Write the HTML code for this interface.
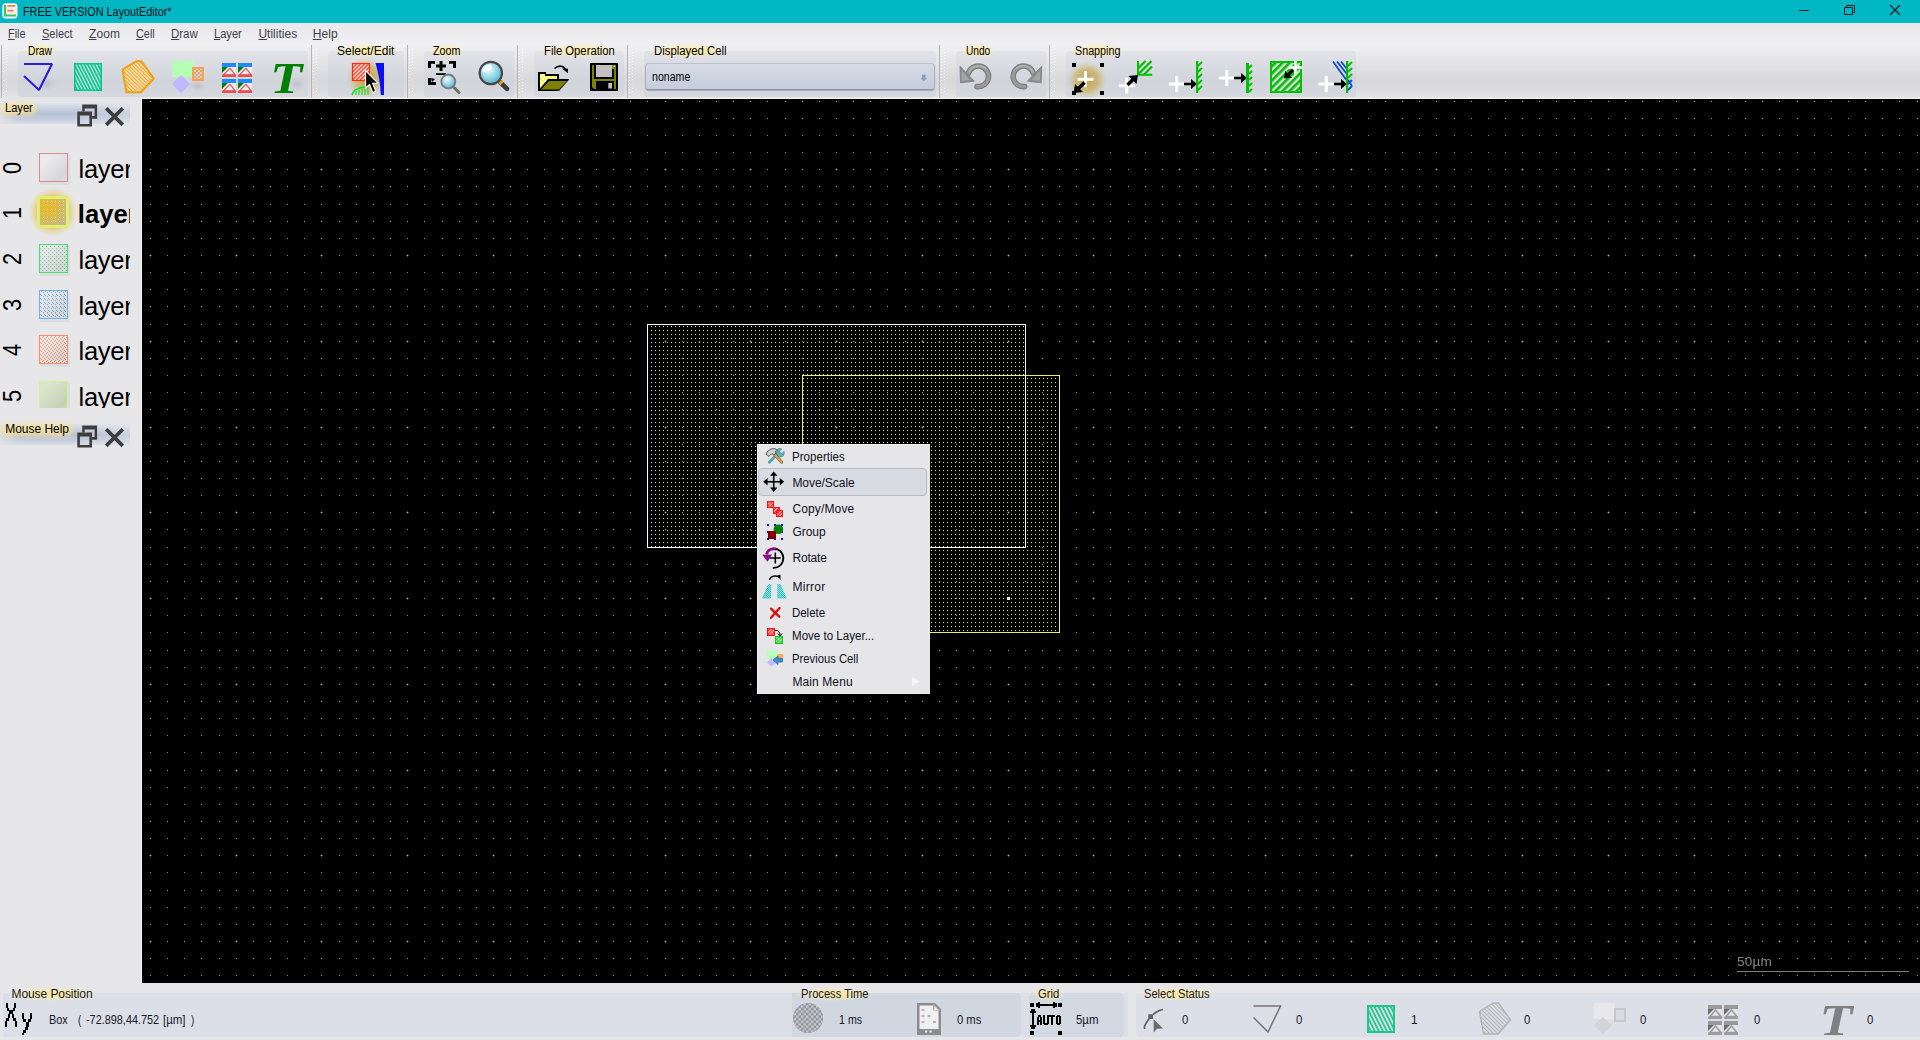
<!DOCTYPE html>
<html><head><meta charset="utf-8"><title>LayoutEditor</title>
<style>
*{box-sizing:border-box;margin:0;padding:0}
html,body{width:1920px;height:1040px;overflow:hidden;background:#e6e6e8;font-family:"Liberation Sans",sans-serif;font-size:12px;color:#141414}
.abs{position:absolute}
#title{position:absolute;left:0;top:0;width:1920px;height:23px;background:#00b7c3}
#title .t{position:absolute;left:23px;top:4px;font-size:12px;line-height:14px;color:#0a1416;letter-spacing:-.02px;white-space:nowrap}
#chrome{position:absolute;left:0;top:23px;width:1920px;height:76px;background:linear-gradient(#e8e8ea 0,#f0f0f2 22px,#e4e4e6 40px,#d8d8da 58px,#dcdcde 66px,#e3e3e5 74px,#e6e6e8 76px)}
.mi{position:absolute;top:28px;font-size:12px;line-height:14px;color:#3c3c46;white-space:nowrap}
.mi u{text-decoration:underline;text-underline-offset:1px}
.grp{position:absolute;background:linear-gradient(rgba(208,213,226,.38),rgba(198,204,218,.46));border-radius:3px}
.glab{position:absolute;font-size:12px;line-height:14px;color:#000;white-space:nowrap;padding:0 3px;background:radial-gradient(ellipse at center,rgba(255,232,150,.9) 0,rgba(255,236,170,.55) 55%,rgba(255,240,190,0) 100%);border-radius:5px}
.hdl{position:absolute;width:5px;background-image:linear-gradient(#fbfbfb 0,#fbfbfb 1.200px,rgba(255,255,255,0) 1.200px),linear-gradient(#fbfbfb 0,#fbfbfb 1.200px,rgba(255,255,255,0) 1.200px);background-size:1px 3px,1px 3px;background-position:1px 1px,4px 0;background-repeat:repeat-y,repeat-y}
.vsep{position:absolute;width:1px;background:#b4b4b8}
#left{position:absolute;left:0;top:99px;width:142px;height:884px;background:#e7e7e9}
#canvas{position:absolute;left:142px;top:99px;width:1778px;height:884px;background:#000;overflow:hidden;box-shadow:0 0 0 1px #f6f6f6}
#status{position:absolute;left:0;top:983px;width:1920px;height:57px;background:#e6e6e8}
.sv{position:absolute;font-size:11px;line-height:14px;color:#1e1e28;white-space:nowrap}
#menu{position:absolute;left:757px;top:444px;width:173px;height:250px;background:#e6e6e8;border-left:1px solid #f4f4f6;border-top:1px solid #f4f4f6}
#menu .it{position:absolute;left:34px;font-size:12px;line-height:14px;color:#14141e;white-space:nowrap;letter-spacing:-.2px}
#menu .hl{position:absolute;left:0px;top:23px;width:169px;height:28px;background:#d9dbe3;border:1px solid #b9bcc8;border-radius:4px}
.lyr{position:absolute;left:78px;font-size:24px;line-height:28px;color:#000;white-space:nowrap;width:52px;overflow:hidden}
.lnum{position:absolute;left:0;width:28px;height:28px;font-size:22px;line-height:28px;text-align:center;color:#000;transform:rotate(-90deg)}
.sw{position:absolute;left:39px;width:29px;height:29px}
.dock{position:absolute;left:0;width:130px;height:21px;background:linear-gradient(90deg,rgba(231,231,233,.75) 0,rgba(231,231,233,0) 14%,rgba(231,231,233,0) 62%,rgba(231,231,233,.45) 100%),linear-gradient(#dfe3eb 0,#c6cfde 30%,#b5c1d5 52%,#c3ccdc 75%,#d9dee7 100%)}
.glow2{position:absolute;border-radius:4px;background:rgba(255,226,140,.62);box-shadow:0 0 4px 2px rgba(255,228,150,.5)}
</style></head><body>
<style>
.glow{position:absolute;border-radius:7px;background:radial-gradient(ellipse closest-side at center,rgba(255,234,150,.9) 0,rgba(255,236,165,.62) 55%,rgba(255,244,210,0) 100%)}
</style>
<style>
.sw0{background:linear-gradient(135deg,#ececee 30%,#d6d6d8 75%,#dcdcde)}
.sw2{background-color:#e8e2e8;background-image:radial-gradient(circle at 1px 1px,#4ee078 .75px,rgba(78,224,120,0) 1.150px),radial-gradient(circle at 3px 3px,#4ee078 .75px,rgba(78,224,120,0) 1.150px);background-size:4px 4px}
.sw3{background-color:#e6e4e6;background-image:linear-gradient(45deg,rgba(0,0,0,0) 40%,#74b6e2 40%,#74b6e2 60%,rgba(0,0,0,0) 60%);background-size:4px 4px;}
.sw4{background-color:#ece4e4;background-image:repeating-linear-gradient(45deg,#ff9070 0,#ff9070 1px,rgba(0,0,0,0) 1px,rgba(0,0,0,0) 2.830px),repeating-linear-gradient(-45deg,#ff9070 0,#ff9070 .8px,rgba(0,0,0,0) .8px,rgba(0,0,0,0) 2.830px)}
.sw5{background-color:#e4eadc;background-image:repeating-linear-gradient(45deg,#d4f09a 0,#d4f09a 1px,rgba(0,0,0,0) 1px,rgba(0,0,0,0) 2.830px),repeating-linear-gradient(-45deg,#d4f09a 0,#d4f09a 1px,rgba(0,0,0,0) 1px,rgba(0,0,0,0) 2.830px)}
</style>
<div id="title"></div>
<svg class="abs" style="left:0;top:0" width="24" height="23" viewBox="0 0 24 23"><rect x="2.3" y="3.2" width="15.2" height="15.2" rx="3.2" fill="#f4f2f0"/><path d="M4 5h2.2v9.4H16v2.1H4z" fill="#48be5e"/><rect x="7.2" y="5.1" width="8.4" height="1.7" rx=".8" fill="#ee8250"/><rect x="7.2" y="9.7" width="6.6" height="1.8" rx=".8" fill="#ee8250"/></svg>
<div class="abs " style="left:23.30px;top:5.00px;font-size:12px;line-height:15px;color:#041416;white-space:nowrap;transform:scaleX(0.9020);transform-origin:0 0;">FREE VERSION LayoutEditor*</div>
<svg class="abs" style="left:1780px;top:0" width="140" height="23" viewBox="0 0 140 23" fill="none" stroke="#0a1a1c" stroke-width="1"><path d="M19 10.5h10"/><path d="M64.500 7.500h8v7h-8zM66.500 7.500v-2h8v7h-2"/><path d="M110 5l10 10M120 5l-10 10" stroke-width="1.1"/></svg>
<div id="chrome"></div>
<div class="abs " style="left:8.40px;top:27.00px;font-size:12px;line-height:15px;color:#3e3e48;white-space:nowrap;transform:scaleX(0.9050);transform-origin:0 0;text-underline-offset:1px;"><u>F</u>ile</div>
<div class="abs " style="left:42.20px;top:27.00px;font-size:12px;line-height:15px;color:#3e3e48;white-space:nowrap;transform:scaleX(0.9175);transform-origin:0 0;text-underline-offset:1px;"><u>S</u>elect</div>
<div class="abs " style="left:89.00px;top:27.00px;font-size:12px;line-height:15px;letter-spacing:0.081px;color:#3e3e48;white-space:nowrap;text-underline-offset:1px;"><u>Z</u>oom</div>
<div class="abs " style="left:136.00px;top:27.00px;font-size:12px;line-height:15px;color:#3e3e48;white-space:nowrap;transform:scaleX(0.9045);transform-origin:0 0;text-underline-offset:1px;"><u>C</u>ell</div>
<div class="abs " style="left:171.00px;top:27.00px;font-size:12px;line-height:15px;color:#3e3e48;white-space:nowrap;transform:scaleX(0.9570);transform-origin:0 0;text-underline-offset:1px;"><u>D</u>raw</div>
<div class="abs " style="left:214.10px;top:27.00px;font-size:12px;line-height:15px;color:#3e3e48;white-space:nowrap;transform:scaleX(0.9261);transform-origin:0 0;text-underline-offset:1px;"><u>L</u>ayer</div>
<div class="abs " style="left:258.40px;top:27.00px;font-size:12px;line-height:15px;letter-spacing:0.014px;color:#3e3e48;white-space:nowrap;text-underline-offset:1px;"><u>U</u>tilities</div>
<div class="abs " style="left:312.75px;top:27.00px;font-size:12px;line-height:15px;letter-spacing:0.117px;color:#3e3e48;white-space:nowrap;text-underline-offset:1px;"><u>H</u>elp</div>
<div class="vsep" style="left:1px;top:45px;height:53px"></div>
<div class="hdl" style="left:2px;top:49px;height:45px"></div>
<div class="hdl" style="left:312px;top:49px;height:45px"></div>
<div class="hdl" style="left:408px;top:49px;height:45px"></div>
<div class="hdl" style="left:518px;top:49px;height:45px"></div>
<div class="hdl" style="left:628px;top:49px;height:45px"></div>
<div class="hdl" style="left:940px;top:49px;height:45px"></div>
<div class="hdl" style="left:1050px;top:49px;height:45px"></div>
<div class="vsep" style="left:311px;top:45px;height:53px"></div>
<div class="vsep" style="left:407px;top:45px;height:53px"></div>
<div class="vsep" style="left:517px;top:45px;height:53px"></div>
<div class="vsep" style="left:627px;top:45px;height:53px"></div>
<div class="vsep" style="left:939px;top:45px;height:53px"></div>
<div class="vsep" style="left:1049px;top:45px;height:53px"></div>
<div class="grp" style="left:18px;top:51px;width:290px;height:45.500px"></div>
<div class="grp" style="left:328px;top:51px;width:76px;height:45.500px"></div>
<div class="grp" style="left:424px;top:51px;width:90px;height:45.500px"></div>
<div class="grp" style="left:534px;top:51px;width:90px;height:45.500px"></div>
<div class="grp" style="left:644px;top:51px;width:292px;height:45.500px"></div>
<div class="grp" style="left:956px;top:51px;width:90px;height:45.500px"></div>
<div class="grp" style="left:1066px;top:51px;width:290px;height:45.500px"></div>
<div class="glow" style="left:22.0px;top:44px;width:36.0px;height:14px"></div>
<div class="abs " style="left:28.00px;top:43.00px;font-size:12.5px;line-height:16px;color:#000;white-space:nowrap;transform:scaleX(0.8228);transform-origin:0 0;">Draw</div>
<div class="glow" style="left:331.0px;top:44px;width:69.4px;height:14px"></div>
<div class="abs " style="left:337.00px;top:43.00px;font-size:12.5px;line-height:16px;color:#000;white-space:nowrap;transform:scaleX(0.9606);transform-origin:0 0;">Select/Edit</div>
<div class="glow" style="left:427.0px;top:44px;width:39.4px;height:14px"></div>
<div class="abs " style="left:433.00px;top:43.00px;font-size:12.5px;line-height:16px;color:#000;white-space:nowrap;transform:scaleX(0.8576);transform-origin:0 0;">Zoom</div>
<div class="glow" style="left:537.8px;top:44px;width:82.9px;height:14px"></div>
<div class="abs " style="left:543.75px;top:43.00px;font-size:12.5px;line-height:16px;color:#000;white-space:nowrap;transform:scaleX(0.9025);transform-origin:0 0;">File Operation</div>
<div class="glow" style="left:647.8px;top:44px;width:84.5px;height:14px"></div>
<div class="abs " style="left:653.75px;top:43.00px;font-size:12.5px;line-height:16px;color:#000;white-space:nowrap;transform:scaleX(0.9074);transform-origin:0 0;">Displayed Cell</div>
<div class="glow" style="left:959.8px;top:44px;width:36.2px;height:14px"></div>
<div class="abs " style="left:965.80px;top:43.00px;font-size:12.5px;line-height:16px;color:#000;white-space:nowrap;transform:scaleX(0.8099);transform-origin:0 0;">Undo</div>
<div class="glow" style="left:1068.6px;top:44px;width:57.4px;height:14px"></div>
<div class="abs " style="left:1074.60px;top:43.00px;font-size:12.5px;line-height:16px;color:#000;white-space:nowrap;transform:scaleX(0.8595);transform-origin:0 0;">Snapping</div>
<svg class="abs" style="left:0;top:0" width="1400" height="99" viewBox="0 0 1400 99">
<defs>
<pattern id="hg" width="3" height="3" patternUnits="userSpaceOnUse" patternTransform="rotate(-27 0 0)"><rect width="1.850" height="3" fill="#00c88a"/></pattern>
<pattern id="ho" width="2.6" height="2.6" patternUnits="userSpaceOnUse" patternTransform="rotate(-45 0 0)"><rect width="1.2" height="2.6" fill="#f0a010"/></pattern>
<pattern id="hr" width="2.8" height="2.8" patternUnits="userSpaceOnUse" patternTransform="rotate(45 0 0)"><rect width="1.3" height="2.8" fill="#ff2a10"/></pattern>
<pattern id="hgr" width="5" height="5" patternUnits="userSpaceOnUse" patternTransform="rotate(45 0 0)"><rect width="2.6" height="5" fill="#00c000"/></pattern>
<pattern id="ck" width="4" height="4" patternUnits="userSpaceOnUse"><rect width="2" height="2" x="0" y="0" fill="#b8d8f0"/><rect width="2" height="2" x="2" y="2" fill="#b8d8f0"/></pattern>
<pattern id="yk" width="4" height="4" patternUnits="userSpaceOnUse"><rect width="4" height="4" fill="#ffff00"/><rect width="2" height="2" fill="#fff"/><rect x="2" y="2" width="2" height="2" fill="#fff"/></pattern>
<radialGradient id="sel" cx=".5" cy=".5" r=".5"><stop offset="0" stop-color="#c0a040" stop-opacity=".95"/><stop offset=".55" stop-color="#c8ae5c" stop-opacity=".7"/><stop offset="1" stop-color="#d8d0b0" stop-opacity="0"/></radialGradient>
<radialGradient id="shd" cx=".5" cy=".5" r=".5"><stop offset="0" stop-color="#9a9aa2" stop-opacity=".6"/><stop offset="1" stop-color="#c8c8d0" stop-opacity="0"/></radialGradient>
<radialGradient id="lens" cx=".4" cy=".35" r=".65"><stop offset="0" stop-color="#f4fcff"/><stop offset=".45" stop-color="#a8e0ec"/><stop offset="1" stop-color="#58b4cc"/></radialGradient>
<g id="cellq"><rect width="14" height="14" fill="#eeecf0"/><rect width="14" height="4" fill="#1e8cff"/><path d="M0 4h6l-6 6z" fill="#008000"/><path d="M8 5.300l5.300 6.500h-12z" fill="#f2f0f2" stroke="#e85050" stroke-width="1.250" stroke-linejoin="miter"/><path d="M0 11.700h14v2.300h-14z" fill="#e85050"/></g>
<g id="wplus"><path d="M-1.5 -8h3v16h-3zM-8 -1.5h16v3h-16z" fill="#fff"/></g>
<g id="rarr"><path d="M0 -1.2h7v-3.8l6 5-6 5v-3.8h-7z" fill="#000"/></g>
</defs>
<!-- draw: path -->
<ellipse cx="46" cy="84" rx="12" ry="9" fill="url(#shd)" opacity=".6"/>
<path d="M24 64h28l-13 26l-15-14" fill="none" stroke="#2a1ed6" stroke-width="2.100" stroke-linejoin="bevel"/>
<!-- box -->
<rect x="75" y="64" width="26" height="26" fill="#f4e6ee"/><rect x="75" y="64" width="26" height="26" fill="url(#hg)"/><rect x="74.75" y="63.75" width="26.5" height="26.5" fill="none" stroke="#00c88a" stroke-width="1.5"/>
<!-- polygon -->
<path d="M122.500 69.500L136 61.300h5.500L153.800 78.500 141 92.300h-14.700L124 78.500z" fill="#f6ead8"/><path d="M122.500 69.500L136 61.300h5.500L153.800 78.500 141 92.300h-14.700L124 78.500z" fill="url(#ho)"/><path d="M122.500 69.500L136 61.300h5.500L153.800 78.500 141 92.300h-14.700L124 78.500z" fill="none" stroke="#f0a010" stroke-width="2" stroke-linejoin="round"/>
<!-- cell -->
<ellipse cx="197" cy="86" rx="10" ry="6" fill="url(#shd)" opacity=".7"/>
<rect x="172" y="61" width="22" height="16" fill="#b4ffb4"/><path d="M181 75l9 9-9 9-9-9z" fill="#c0b8ff"/><rect x="192" y="67" width="12" height="14" fill="#ffa050"/><rect x="194" y="69" width="8" height="10" fill="url(#ck)"/>
<!-- array -->
<use href="#cellq" x="222" y="63"/><use href="#cellq" x="238" y="63"/><use href="#cellq" x="222" y="79"/><use href="#cellq" x="238" y="79"/>
<!-- text T -->
<ellipse cx="297" cy="84" rx="10" ry="8" fill="url(#shd)" opacity=".6"/>
<text x="270.300" y="92.600" font-family="Liberation Serif" font-weight="bold" font-style="italic" font-size="44" fill="#008000" textLength="32" lengthAdjust="spacingAndGlyphs">T</text>
<!-- select/edit -->
<ellipse cx="367" cy="78" rx="22" ry="21" fill="url(#sel)"/>
<rect x="352.5" y="63.5" width="17" height="17" fill="#ffe8e0" /><rect x="352.5" y="63.5" width="17" height="17" fill="url(#hr)"/><rect x="352.5" y="63.5" width="17" height="17" fill="none" stroke="#ff2a10" stroke-width="1.2"/>
<path d="M375.5 63h8.5v32h-3.2c-.3-12-2.500-22-5.300-32z" fill="#0a10f0"/>
<path d="M352 95c1-5 7-8 14-8" fill="none" stroke="#10e020" stroke-width="1.4"/><path d="M356 91v4M359 89.500v5.500M362 88.500v6.500M365 88v7M368 88v7" stroke="#10e020" stroke-width="1.1"/>
<path d="M365.500 70.500l.2 17.500 3.800-3.600 3.400 8.200 3-1.300-3.400-8 5.400-.2z" fill="#000" stroke="#fff" stroke-width="1.1" stroke-linejoin="round"/>
<!-- zoom1 -->
<g fill="#000"><path d="M428 61h7v3h-4v4h-3zM449 61h7v7h-3v-4h-4zM428 78h3v4h5v3h-8z"/><path d="M439.500 61h3v3.500h3.500v3h-3.500v3.500h-3v-3.500h-3.500v-3h3.500z"/><rect x="436" y="73.200" width="10" height="1.800"/><path d="M431 78l4 1-3 3z"/><path d="M431.500 63.500l3 .5-2.500 2.500zM452.500 63.500l-3 .5 2.500 2.500z" fill="#e8e8ec"/></g>
<path d="M454 87.500l5 5" stroke="#70706a" stroke-width="3" stroke-linecap="round"/><circle cx="448.300" cy="81.500" r="7" fill="url(#lens)" stroke="#7a7a80" stroke-width="1.800"/>
<!-- zoom2 -->
<path d="M500 82l7 6.800" stroke="#3a3a3a" stroke-width="4.600" stroke-linecap="round"/><path d="M499.800 81.600l2.200 2.200" stroke="#d8b020" stroke-width="4.200"/><circle cx="490.800" cy="73" r="11.200" fill="url(#lens)" stroke="#484848" stroke-width="2.200"/><ellipse cx="487" cy="68.500" rx="5.500" ry="3.200" fill="#fff" opacity=".75" transform="rotate(-30 487 68.500)"/>
<!-- open -->
<path d="M538 72h8v2h13v5h10.500l-10.500 12h-21z" fill="#000"/><path d="M540 74h5v2h12v3h-9l-8 9.500z" fill="url(#yk)"/><path d="M549 81h18l-8 8.500h-18z" fill="#808000"/>
<path d="M554.500 68.500c4-3.500 9-3 11 1" fill="none" stroke="#000" stroke-width="1.600"/><path d="M562 68.500l6 .2-.2 4.500z" fill="#000"/>
<!-- save -->
<rect x="590" y="63" width="28" height="28" fill="#000"/><path d="M592 65h24v24h-22l-2-2z" fill="#808000"/><rect x="596" y="65" width="16" height="12" fill="#c0c0c0"/><rect x="594" y="65" width="2" height="14" fill="#000"/><rect x="612" y="69" width="2" height="10" fill="#000"/><rect x="594" y="77" width="20" height="2" fill="#000"/><rect x="613.500" y="65.500" width="1.500" height="1.500" fill="#e8e8e8"/><rect x="596" y="81" width="18" height="9" fill="#000"/><rect x="608.300" y="83" width="3.700" height="5.500" fill="#c0c0c0"/>
<!-- undo / redo -->
<g id="undo"><path d="M968.300 73.500A10.300 10.300 0 1 1 977 86.600" fill="none" stroke="#7c7c7e" stroke-width="5.600" stroke-linecap="round"/><path d="M968.300 73.500A10.300 10.300 0 1 1 977 86.600" fill="none" stroke="#9a9a9c" stroke-width="3.200" stroke-linecap="round"/><path d="M968.800 72.500A10.300 10.300 0 0 1 986 69" fill="none" stroke="#b4b4b6" stroke-width="1.600"/><path d="M960 66.200l.5 16.600 13.800-1.600z" fill="#8c8c8e" stroke="#7c7c7e" stroke-width=".8" stroke-linejoin="round"/><path d="M961.500 70l.3 11 8-1z" fill="#a4a4a6"/></g>
<use href="#undo" transform="translate(2001.700 0) scale(-1 1)"/>
<!-- snapping 1 -->
<ellipse cx="1087" cy="80" rx="21" ry="20" fill="url(#sel)"/>
<g fill="#000"><rect x="1072" y="63" width="4" height="4"/><rect x="1100" y="63" width="4" height="4"/><rect x="1072" y="91" width="4" height="4"/><rect x="1100" y="91" width="4" height="4"/></g>
<use href="#wplus" x="1085.500" y="79.200"/><path d="M1073.500 93l1.500-9 2.800 2.800 5.500-5.500 2.400 2.400-5.500 5.500 2.800 2.800z" fill="#000"/>
<!-- snapping 2 -->
<path d="M1138 61.500h14v13h-14z" fill="none"/><path d="M1138 61v13.800h14.200" fill="none" stroke="#00c000" stroke-width="2"/><path d="M1138 68.500l7.500-7.500M1138 74.500l13.500-13.500M1144 74.500l8-8" stroke="#00c000" stroke-width="2.200"/>
<use href="#wplus" x="1126.700" y="85.800"/><path d="M1138 75l-1.500 9-2.800-2.800-5 5-2.400-2.400 5-5-2.800-2.800z" fill="#000"/>
<!-- snapping 3 -->
<use href="#wplus" x="1176.800" y="84"/><use href="#rarr" x="1184" y="84"/><rect x="1196" y="61" width="2.200" height="32" fill="#00c000"/><path d="M1198 66l4-4M1198 72l4-4M1198 78l4-4M1198 84l4-4M1198 90l4-4" stroke="#00c000" stroke-width="1.800"/>
<!-- snapping 4 -->
<use href="#wplus" x="1226.800" y="78"/><use href="#rarr" x="1234" y="78"/><rect x="1246" y="63" width="3" height="30" fill="#00c000"/><path d="M1249 68l3-3M1249 74l3-3M1249 80l3-3M1249 86l3-3M1249 92l3-3" stroke="#00c000" stroke-width="1.800"/>
<!-- snapping 5 -->
<rect x="1271" y="62" width="30" height="30" fill="#dcdce0"/><rect x="1271" y="62" width="30" height="30" fill="url(#hgr)"/><rect x="1271" y="62" width="30" height="30" fill="none" stroke="#00c000" stroke-width="2"/>
<use href="#wplus" x="1295.500" y="67.500" transform="translate(1295.500 67.500) scale(.85) translate(-1295.500 -67.500)"/><path d="M1284 78.500l1.200-7.500 2.300 2.300 4.500-4.500 2.200 2.200-4.500 4.500 2.300 2.300z" fill="#000"/>
<!-- snapping 6 -->
<path d="M1333 61.500l13 18M1337 61.500l9.500 12M1341 61.500l5.500 7" stroke="#1048d0" stroke-width="1.800"/>
<use href="#wplus" x="1326.300" y="84"/><use href="#rarr" x="1334" y="84"/><rect x="1346" y="61" width="2.200" height="32" fill="#00c000"/><path d="M1348 66l4-4M1348 72l4-4M1348 78l4-4" stroke="#00c000" stroke-width="1.800"/><path d="M1348 84l4-4M1348 90l4-4M1348 80l4 6" stroke="#1048d0" stroke-width="1.800"/>
</svg>

<div class="abs" style="left:645px;top:63px;width:290px;height:27px;border-radius:4px;background:linear-gradient(#d6dbe6,#c6ccda);border:1px solid #aab0c0;border-top-color:#bcc2d0;border-bottom-color:#8e96a8;box-shadow:0 1px 0 rgba(120,128,150,.5)"></div>
<div class="abs " style="left:651.70px;top:69.00px;font-size:12.5px;line-height:16px;color:#000;white-space:nowrap;transform:scaleX(0.8479);transform-origin:0 0;">noname</div>
<svg class="abs" style="left:920px;top:74px" width="8" height="8" viewBox="0 0 8 8"><path d="M2 .8h3.6v3.2h1.6L3.8 7.2.4 4H2z" fill="#8a9cc8"/></svg><div id="left"></div>
<div class="dock" style="top:103px"></div>
<div class="glow2" style="left:3px;top:104px;width:32px;height:10px"></div>
<div class="abs " style="left:5.25px;top:101.00px;font-size:12px;line-height:15px;color:#000;white-space:nowrap;transform:scaleX(0.9244);transform-origin:0 0;">Layer</div>
<svg class="abs" style="left:74px;top:102px" width="54" height="26" viewBox="74 102 54 26"><g fill="#3e3e40"><path fill-rule="evenodd" d="M82.200 104.400h14.900v14.300h-5v-2.600h2.500v-7.600h-9.900v3h-2.500z"/><path fill-rule="evenodd" d="M77.300 111.500h14.700v15h-14.700zM79.900 115.500v8.400h9.500v-8.400z"/></g><path d="M106.200 108.300l16.600 16.600M122.800 108.300l-16.600 16.600" stroke="#3e3e40" stroke-width="3.700" fill="none"/></svg>
<div class="dock" style="top:424px"></div>
<div class="glow2" style="left:3px;top:425px;width:68px;height:10px"></div>
<div class="abs " style="left:5.25px;top:422.00px;font-size:12px;line-height:15px;letter-spacing:-0.028px;color:#000;white-space:nowrap;">Mouse Help</div>
<svg class="abs" style="left:74px;top:423px" width="54" height="26" viewBox="74 102 54 26"><g fill="#3e3e40"><path fill-rule="evenodd" d="M82.200 104.400h14.900v14.300h-5v-2.600h2.500v-7.600h-9.900v3h-2.500z"/><path fill-rule="evenodd" d="M77.300 111.500h14.700v15h-14.700zM79.900 115.500v8.400h9.500v-8.400z"/></g><path d="M106.200 108.300l16.600 16.600M122.800 108.300l-16.600 16.600" stroke="#3e3e40" stroke-width="3.700" fill="none"/></svg>
<div class="abs" style="left:0;top:140px;width:142px;height:268px;overflow:hidden"><div class="abs" style="left:0;top:-140px;width:142px;height:420px">
<svg class="abs" style="left:0;top:140px" width="142" height="280" viewBox="0 140 142 280" shape-rendering="crispEdges"><defs><pattern id="p1" width="4" height="4" patternUnits="userSpaceOnUse"><rect x="2" y="1" width="1" height="1" fill="#f2f27c"/></pattern><pattern id="p2" width="4" height="4" patternUnits="userSpaceOnUse"><rect x="3" y="2" width="1" height="1" fill="#54e282"/><rect x="1" y="0" width="1" height="1" fill="#54e282"/></pattern><pattern id="p3" width="4" height="4" patternUnits="userSpaceOnUse"><rect x="0" y="2" width="1" height="1" fill="#68b0e2"/><rect x="1" y="0" width="1" height="1" fill="#68b0e2"/><rect x="2" y="1" width="1" height="1" fill="#68b0e2"/></pattern><pattern id="p4" width="4" height="4" patternUnits="userSpaceOnUse"><rect x="1" y="3" width="1" height="1" fill="#ff8c64"/><rect x="2" y="0" width="1" height="1" fill="#ff8c64"/><rect x="0" y="1" width="1" height="1" fill="#ff8c64"/><rect x="3" y="2" width="1" height="1" fill="#ff8c64"/></pattern><pattern id="p5" width="4" height="4" patternUnits="userSpaceOnUse"><rect x="3" y="3" width="1" height="1" fill="#cef68c"/><rect x="3" y="1" width="1" height="1" fill="#cef68c"/><rect x="2" y="0" width="1" height="1" fill="#cef68c"/><rect x="0" y="0" width="1" height="1" fill="#cef68c"/><rect x="1" y="2" width="1" height="1" fill="#cef68c"/></pattern><linearGradient id="sg" x1="0" y1="0" x2="1" y2="1"><stop offset=".25" stop-color="#000" stop-opacity="0"/><stop offset=".8" stop-color="#000" stop-opacity=".09"/><stop offset="1" stop-color="#000" stop-opacity=".05"/></linearGradient><radialGradient id="og" cx=".33" cy=".33" r=".75"><stop offset="0" stop-color="#e8ba28"/><stop offset=".5" stop-color="#dcb84c"/><stop offset="1" stop-color="#c6b886"/></radialGradient><radialGradient id="gl" cx=".5" cy=".5" r=".5"><stop offset="0" stop-color="#e6bc3c" stop-opacity="1"/><stop offset=".6" stop-color="#e6c050" stop-opacity=".8"/><stop offset="1" stop-color="#e6d090" stop-opacity="0"/></radialGradient></defs>
<rect x="40" y="155" width="30" height="30" fill="#b4b4b8" opacity=".18"/>
<rect x="39" y="153" width="29" height="29" fill="#ebebed"/>
<rect x="39" y="153" width="29" height="29" fill="url(#sg)"/>
<rect x="39.500" y="153.5" width="28" height="28" fill="none" stroke="#d98c8c"/>
<rect x="40" y="246" width="30" height="30" fill="#b4b4b8" opacity=".18"/>
<rect x="39" y="244" width="29" height="29" fill="#ece4ec"/>
<g transform="translate(39 244)"><rect x="1" y="1" width="27" height="27" fill="url(#p2)"/></g>
<rect x="39" y="244" width="29" height="29" fill="url(#sg)"/>
<rect x="39.500" y="244.5" width="28" height="28" fill="none" stroke="#44e074"/>
<rect x="40" y="292" width="30" height="30" fill="#b4b4b8" opacity=".18"/>
<rect x="39" y="290" width="29" height="29" fill="#ece8ea"/>
<g transform="translate(39 290)"><rect x="1" y="1" width="27" height="27" fill="url(#p3)"/></g>
<rect x="39" y="290" width="29" height="29" fill="url(#sg)"/>
<rect x="39.500" y="290.5" width="28" height="28" fill="none" stroke="#70b4e6"/>
<rect x="40" y="337" width="30" height="30" fill="#b4b4b8" opacity=".18"/>
<rect x="39" y="335" width="29" height="29" fill="#e8eef0"/>
<g transform="translate(39 335)"><rect x="1" y="1" width="27" height="27" fill="url(#p4)"/></g>
<rect x="39" y="335" width="29" height="29" fill="url(#sg)"/>
<rect x="39.500" y="335.5" width="28" height="28" fill="none" stroke="#ff8c64"/>
<rect x="40" y="383" width="30" height="30" fill="#b4b4b8" opacity=".18"/>
<rect x="39" y="381" width="29" height="29" fill="#dedee6"/>
<g transform="translate(39 381)"><rect x="1" y="1" width="27" height="27" fill="url(#p5)"/></g>
<rect x="39" y="381" width="29" height="29" fill="url(#sg)"/>
<rect x="39.500" y="381.5" width="28" height="28" fill="none" stroke="#cef68c"/>
<circle cx="53" cy="212" r="25" fill="url(#gl)" shape-rendering="auto"/>
<rect x="37" y="196" width="32" height="32" fill="#e0f06e"/><rect x="40" y="199" width="26" height="26" fill="url(#og)"/><g transform="translate(37 196)"><rect x="4" y="3" width="25" height="26" fill="url(#p1)"/></g>
</svg>
<div class="abs" style="left:-2.800px;top:152.5px;width:30px;height:30px;font-size:25px;line-height:30px;text-align:center;color:#000;transform:rotate(-90deg) scaleX(.87)">0</div>
<div class="abs " style="left:78.60px;top:153.00px;font-size:25.6px;line-height:32px;color:#000;white-space:nowrap;width:51.400px;overflow:hidden;letter-spacing:-.35px;">layer</div>
<div class="abs" style="left:-2.800px;top:197.5px;width:30px;height:30px;font-size:25px;line-height:30px;text-align:center;color:#000;transform:rotate(-90deg) scaleX(.87)">1</div>
<div class="abs " style="left:77.80px;top:198.00px;font-size:25.6px;line-height:32px;color:#000;white-space:nowrap;font-weight:bold;width:52.200px;overflow:hidden;">layer</div>
<div class="abs" style="left:-2.800px;top:243.5px;width:30px;height:30px;font-size:25px;line-height:30px;text-align:center;color:#000;transform:rotate(-90deg) scaleX(.87)">2</div>
<div class="abs " style="left:78.60px;top:244.00px;font-size:25.6px;line-height:32px;color:#000;white-space:nowrap;width:51.400px;overflow:hidden;letter-spacing:-.35px;">layer</div>
<div class="abs" style="left:-2.800px;top:289.5px;width:30px;height:30px;font-size:25px;line-height:30px;text-align:center;color:#000;transform:rotate(-90deg) scaleX(.87)">3</div>
<div class="abs " style="left:78.60px;top:290.00px;font-size:25.6px;line-height:32px;color:#000;white-space:nowrap;width:51.400px;overflow:hidden;letter-spacing:-.35px;">layer</div>
<div class="abs" style="left:-2.800px;top:334.5px;width:30px;height:30px;font-size:25px;line-height:30px;text-align:center;color:#000;transform:rotate(-90deg) scaleX(.87)">4</div>
<div class="abs " style="left:78.60px;top:335.00px;font-size:25.6px;line-height:32px;color:#000;white-space:nowrap;width:51.400px;overflow:hidden;letter-spacing:-.35px;">layer</div>
<div class="abs" style="left:-2.800px;top:380.5px;width:30px;height:30px;font-size:25px;line-height:30px;text-align:center;color:#000;transform:rotate(-90deg) scaleX(.87)">5</div>
<div class="abs " style="left:78.60px;top:381.00px;font-size:25.6px;line-height:32px;color:#000;white-space:nowrap;width:51.400px;overflow:hidden;letter-spacing:-.35px;">layer</div>
</div></div><div id="canvas"><svg width="1778" height="884" viewBox="0 0 1778 884" shape-rendering="crispEdges" style="position:absolute;left:0;top:0">
<defs><pattern id="yd" width="4" height="4" patternUnits="userSpaceOnUse"><rect x="1" y="3" width="1" height="1" fill="#dff063"/></pattern></defs>
<rect x="506" y="226" width="377" height="222" fill="url(#yd)"/>
<path d="M884 277h33v256h-256v-85h223z" fill="url(#yd)"/>
<rect x="660.5" y="276.5" width="257" height="257" fill="none" stroke="#e4f062" stroke-width="1"/>
<rect x="505.5" y="225.5" width="378" height="223" fill="none" stroke="#fff" stroke-width="1"/>
<defs><path id="gr" d="M8 0h1v1h-1zM25 0h1v1h-1zM42 0h1v1h-1zM59 0h1v1h-1zM77 0h1v1h-1zM94 0h1v1h-1zM111 0h1v1h-1zM128 0h1v1h-1zM145 0h1v1h-1zM162 0h1v1h-1zM179 0h1v1h-1zM197 0h1v1h-1zM214 0h1v1h-1zM231 0h1v1h-1zM248 0h1v1h-1zM265 0h1v1h-1zM282 0h1v1h-1zM300 0h1v1h-1zM317 0h1v1h-1zM334 0h1v1h-1zM351 0h1v1h-1zM368 0h1v1h-1zM385 0h1v1h-1zM402 0h1v1h-1zM420 0h1v1h-1zM437 0h1v1h-1zM454 0h1v1h-1zM471 0h1v1h-1zM488 0h1v1h-1zM505 0h1v1h-1zM523 0h1v1h-1zM540 0h1v1h-1zM557 0h1v1h-1zM574 0h1v1h-1zM591 0h1v1h-1zM608 0h1v1h-1zM625 0h1v1h-1zM643 0h1v1h-1zM660 0h1v1h-1zM677 0h1v1h-1zM694 0h1v1h-1zM711 0h1v1h-1zM728 0h1v1h-1zM745 0h1v1h-1zM763 0h1v1h-1zM780 0h1v1h-1zM797 0h1v1h-1zM814 0h1v1h-1zM831 0h1v1h-1zM848 0h1v1h-1zM866 0h1v1h-1zM883 0h1v1h-1zM900 0h1v1h-1zM917 0h1v1h-1zM934 0h1v1h-1zM951 0h1v1h-1zM968 0h1v1h-1zM986 0h1v1h-1zM1003 0h1v1h-1zM1020 0h1v1h-1zM1037 0h1v1h-1zM1054 0h1v1h-1zM1071 0h1v1h-1zM1089 0h1v1h-1zM1106 0h1v1h-1zM1123 0h1v1h-1zM1140 0h1v1h-1zM1157 0h1v1h-1zM1174 0h1v1h-1zM1191 0h1v1h-1zM1209 0h1v1h-1zM1226 0h1v1h-1zM1243 0h1v1h-1zM1260 0h1v1h-1zM1277 0h1v1h-1zM1294 0h1v1h-1zM1312 0h1v1h-1zM1329 0h1v1h-1zM1346 0h1v1h-1zM1363 0h1v1h-1zM1380 0h1v1h-1zM1397 0h1v1h-1zM1414 0h1v1h-1zM1432 0h1v1h-1zM1449 0h1v1h-1zM1466 0h1v1h-1zM1483 0h1v1h-1zM1500 0h1v1h-1zM1517 0h1v1h-1zM1534 0h1v1h-1zM1552 0h1v1h-1zM1569 0h1v1h-1zM1586 0h1v1h-1zM1603 0h1v1h-1zM1620 0h1v1h-1zM1637 0h1v1h-1zM1655 0h1v1h-1zM1672 0h1v1h-1zM1689 0h1v1h-1zM1706 0h1v1h-1zM1723 0h1v1h-1zM1740 0h1v1h-1zM1757 0h1v1h-1zM1775 0h1v1h-1z" fill="#8e8e8e"/><path id="ga" d="M8 -1h1v3h-1zM7 0h3v1h-3zM94 -1h1v3h-1zM93 0h3v1h-3zM179 -1h1v3h-1zM178 0h3v1h-3zM265 -1h1v3h-1zM264 0h3v1h-3zM351 -1h1v3h-1zM350 0h3v1h-3zM437 -1h1v3h-1zM436 0h3v1h-3zM523 -1h1v3h-1zM522 0h3v1h-3zM608 -1h1v3h-1zM607 0h3v1h-3zM694 -1h1v3h-1zM693 0h3v1h-3zM780 -1h1v3h-1zM779 0h3v1h-3zM866 -1h1v3h-1zM865 0h3v1h-3zM951 -1h1v3h-1zM950 0h3v1h-3zM1037 -1h1v3h-1zM1036 0h3v1h-3zM1123 -1h1v3h-1zM1122 0h3v1h-3zM1209 -1h1v3h-1zM1208 0h3v1h-3zM1294 -1h1v3h-1zM1293 0h3v1h-3zM1380 -1h1v3h-1zM1379 0h3v1h-3zM1466 -1h1v3h-1zM1465 0h3v1h-3zM1552 -1h1v3h-1zM1551 0h3v1h-3zM1637 -1h1v3h-1zM1636 0h3v1h-3zM1723 -1h1v3h-1zM1722 0h3v1h-3z" fill="#404040"/><path id="gc" d="M8 0h1v1h-1zM94 0h1v1h-1zM179 0h1v1h-1zM265 0h1v1h-1zM351 0h1v1h-1zM437 0h1v1h-1zM523 0h1v1h-1zM608 0h1v1h-1zM694 0h1v1h-1zM780 0h1v1h-1zM866 0h1v1h-1zM951 0h1v1h-1zM1037 0h1v1h-1zM1123 0h1v1h-1zM1209 0h1v1h-1zM1294 0h1v1h-1zM1380 0h1v1h-1zM1466 0h1v1h-1zM1552 0h1v1h-1zM1637 0h1v1h-1zM1723 0h1v1h-1z" fill="#a8a8a8"/></defs><g style="mix-blend-mode:screen"><use href="#gr" y="2"/><use href="#gr" y="19"/><use href="#gr" y="36"/><use href="#gr" y="53"/><use href="#gr" y="70"/><use href="#ga" y="70"/><use href="#gc" y="70"/><use href="#gr" y="87"/><use href="#gr" y="105"/><use href="#gr" y="122"/><use href="#gr" y="139"/><use href="#gr" y="156"/><use href="#ga" y="156"/><use href="#gc" y="156"/><use href="#gr" y="173"/><use href="#gr" y="190"/><use href="#gr" y="207"/><use href="#gr" y="225"/><use href="#gr" y="242"/><use href="#ga" y="242"/><use href="#gc" y="242"/><use href="#gr" y="259"/><use href="#gr" y="276"/><use href="#gr" y="293"/><use href="#gr" y="310"/><use href="#gr" y="328"/><use href="#ga" y="328"/><use href="#gc" y="328"/><use href="#gr" y="345"/><use href="#gr" y="362"/><use href="#gr" y="379"/><use href="#gr" y="396"/><use href="#gr" y="413"/><use href="#ga" y="413"/><use href="#gc" y="413"/><use href="#gr" y="430"/><use href="#gr" y="448"/><use href="#gr" y="465"/><use href="#gr" y="482"/><use href="#gr" y="499"/><use href="#ga" y="499"/><use href="#gc" y="499"/><use href="#gr" y="516"/><use href="#gr" y="533"/><use href="#gr" y="551"/><use href="#gr" y="568"/><use href="#gr" y="585"/><use href="#ga" y="585"/><use href="#gc" y="585"/><use href="#gr" y="602"/><use href="#gr" y="619"/><use href="#gr" y="636"/><use href="#gr" y="653"/><use href="#gr" y="671"/><use href="#ga" y="671"/><use href="#gc" y="671"/><use href="#gr" y="688"/><use href="#gr" y="705"/><use href="#gr" y="722"/><use href="#gr" y="739"/><use href="#gr" y="756"/><use href="#ga" y="756"/><use href="#gc" y="756"/><use href="#gr" y="773"/><use href="#gr" y="791"/><use href="#gr" y="808"/><use href="#gr" y="825"/><use href="#gr" y="842"/><use href="#ga" y="842"/><use href="#gc" y="842"/><use href="#gr" y="859"/><use href="#gr" y="876"/></g>
<rect x="865" y="498" width="3" height="3" fill="#f4f4f0"/>
<rect x="1595" y="872" width="172" height="1" fill="#7e7e7e"/>
</svg>
<div class="abs " style="left:1595.00px;top:854.00px;font-size:13.5px;line-height:17px;letter-spacing:0.240px;color:#868686;white-space:nowrap;">50µm</div>
</div>
<div id="menu"><div class="hl"></div></div>
<div class="abs " style="left:792.40px;top:450.00px;font-size:12px;line-height:15px;color:#10101c;white-space:nowrap;transform:scaleX(0.9654);transform-origin:0 0;">Properties</div>
<div class="abs " style="left:792.40px;top:476.00px;font-size:12px;line-height:15px;letter-spacing:-0.040px;color:#10101c;white-space:nowrap;">Move/Scale</div>
<div class="abs " style="left:792.40px;top:502.00px;font-size:12px;line-height:15px;letter-spacing:0.145px;color:#10101c;white-space:nowrap;">Copy/Move</div>
<div class="abs " style="left:792.40px;top:525.00px;font-size:12px;line-height:15px;letter-spacing:-0.011px;color:#10101c;white-space:nowrap;">Group</div>
<div class="abs " style="left:792.40px;top:551.00px;font-size:12px;line-height:15px;letter-spacing:-0.176px;color:#10101c;white-space:nowrap;">Rotate</div>
<div class="abs " style="left:792.40px;top:580.00px;font-size:12px;line-height:15px;letter-spacing:0.329px;color:#10101c;white-space:nowrap;">Mirror</div>
<div class="abs " style="left:792.40px;top:606.00px;font-size:12px;line-height:15px;color:#10101c;white-space:nowrap;transform:scaleX(0.9513);transform-origin:0 0;">Delete</div>
<div class="abs " style="left:792.40px;top:629.00px;font-size:12px;line-height:15px;color:#10101c;white-space:nowrap;transform:scaleX(0.9639);transform-origin:0 0;">Move to Layer...</div>
<div class="abs " style="left:792.40px;top:652.00px;font-size:12px;line-height:15px;color:#10101c;white-space:nowrap;transform:scaleX(0.9378);transform-origin:0 0;">Previous Cell</div>
<div class="abs " style="left:792.40px;top:675.00px;font-size:12px;line-height:15px;letter-spacing:0.104px;color:#10101c;white-space:nowrap;">Main Menu</div>
<svg class="abs" style="left:757px;top:444px" width="173" height="250" viewBox="757 444 173 250">
<defs>
<pattern id="mh" width="2.400" height="2.400" patternUnits="userSpaceOnUse" patternTransform="rotate(45 0 0)"><rect width="1.200" height="2.400" fill="#ff1010"/></pattern>
<pattern id="mhg" width="2.400" height="2.400" patternUnits="userSpaceOnUse" patternTransform="rotate(45 0 0)"><rect width="1.200" height="2.400" fill="#10c818"/></pattern>
<pattern id="mt" width="2" height="2" patternUnits="userSpaceOnUse"><rect width="2" height="2" fill="#30c0c0"/><rect width="1" height="1" fill="#90e0e0"/><rect x="1" y="1" width="1" height="1" fill="#90e0e0"/></pattern>
</defs>
<!-- properties: hammer + wrench -->
<path d="M769.300 462.300l8.500-9" stroke="#4ea8b2" stroke-width="2.800" stroke-linecap="round"/><path d="M776.500 450.300c1.200-2 3.800-2.500 5.300-1.300l-2.200 2.200.7 1.800 2 .4 1.600-2.200c.8 1.800.3 4-1.400 5.200-1.600 1-3.600.8-4.900-.3z" fill="#58b4bc" stroke="#2e7880" stroke-width=".5"/>
<path d="M773.500 453l8 9" stroke="#7a5820" stroke-width="3.200" stroke-linecap="round"/><path d="M773.500 453l8 9" stroke="#d0a458" stroke-width="2" stroke-linecap="round"/>
<path d="M766.300 454.500c.2-2.500 2.500-5 6-5.800 2.200-.4 4.200.4 5.200 1.600l-2.400 1.200 1 1.500-2.300 2-1.200-1.200c-1.500.2-2.800 1.200-3.600 2.600z" fill="#cfcfd6" stroke="#3a3a40" stroke-width=".8" stroke-linejoin="round"/>
<!-- move/scale arrows -->
<g fill="#000"><rect x="772.900" y="474" width="1.600" height="15.500"/><rect x="766" y="480.950" width="15.500" height="1.600"/><path d="M773.700 471.400l3.700 4.400h-7.400zM773.700 492l3.700-4.400h-7.400zM763.200 481.750l4.400-3.700v7.400zM784.200 481.750l-4.400-3.700v7.400z"/></g>
<!-- copy/move -->
<g fill="#f6e4e4" stroke="#ff1010" stroke-width="1.200"><rect x="767.600" y="501.600" width="5.800" height="5.800"/><rect x="773.600" y="507.600" width="5.800" height="5.800"/><rect x="776.600" y="510.600" width="5.800" height="5.800"/></g>
<g fill="url(#mh)"><rect x="767.600" y="501.600" width="5.800" height="5.800"/><rect x="773.600" y="507.600" width="5.800" height="5.800"/><rect x="776.600" y="510.600" width="5.800" height="5.800"/></g>
<!-- group -->
<g fill="#1010f0"><rect x="767" y="524" width="2" height="2"/><rect x="774" y="524" width="2" height="2"/><rect x="781" y="524" width="2" height="2"/><rect x="767" y="531" width="2" height="2"/><rect x="781" y="531" width="2" height="2"/><rect x="767" y="538" width="2" height="2"/><rect x="774" y="538" width="2" height="2"/><rect x="781" y="538" width="2" height="2"/></g>
<circle cx="778.300" cy="529.300" r="4.800" fill="#008000"/><rect x="768" y="531" width="8" height="8" fill="#800000"/>
<!-- rotate -->
<path d="M772.500 548.600a9.700 9.700 0 1 1 .3 19.300" fill="none" stroke="#000" stroke-width="1.800"/><path d="M775.300 552.500v11M769.800 558h11" stroke="#000" stroke-width="1.600"/><path d="M776.500 549.200c-5-1.200-8.500.5-10 5" fill="none" stroke="#8a0c8a" stroke-width="2.800"/><path d="M762.300 554.800l9.800-.3-4.600 7.300z" fill="#8a0c8a"/>
<!-- mirror -->
<path d="M769.500 580c.5-4 6.500-5.500 9.800-2.500" fill="none" stroke="#000" stroke-width="1.500"/><path d="M777.200 575.200l3.300-.5v5.300z" fill="#000"/><path d="M768.200 584h3v14.500h-9.200zM780.300 584h-3v14.500h9.600z" fill="url(#mt)"/>
<!-- delete -->
<path d="M771 608.700l8.300 8M779.600 608l-8.600 9.800" stroke="#e00808" stroke-width="2.300" stroke-linecap="round"/>
<!-- move to layer -->
<rect x="767.600" y="628.600" width="6.800" height="6.800" fill="#f6e4e4"/><rect x="767.600" y="628.600" width="6.800" height="6.800" fill="url(#mh)" stroke="#ff1010" stroke-width="1.200"/><rect x="775.600" y="636.600" width="6.800" height="6.800" fill="#e4f2e4"/><rect x="775.600" y="636.600" width="6.800" height="6.800" fill="url(#mhg)" stroke="#10c818" stroke-width="1.200"/><path d="M775 630.500c3-.5 5 1.500 5 4.500" fill="none" stroke="#000" stroke-width="1"/><path d="M777.700 633.500l2.300 2.500 2.300-2.500" fill="none" stroke="#000" stroke-width="1"/>
<!-- previous cell -->
<rect x="767" y="651" width="11" height="8" fill="#b8ffb8"/><path d="M771.500 658l4.500 4.500-4.500 4.500-4.500-4.500z" fill="#c4bcff"/><rect x="777.500" y="654" width="5.500" height="7" fill="#ffa858"/><path d="M773 660l5-4v2.500h4.500v3.500h-4.500v2.500z" fill="#3890d8" stroke="#185898" stroke-width=".6"/>
<!-- submenu arrow -->
<path d="M912 677l8 4.500-8 4.500z" fill="#f4f4f6"/>
</svg>
<div id="status"></div>
<div class="abs" style="left:3px;top:993px;width:789px;height:44px;background:#dcdfe8;border-radius:3px 0 0 3px"></div>
<div class="abs" style="left:792px;top:993px;width:229px;height:44px;background:#d1d7e1;border-radius:0 4px 4px 0"></div>
<div class="abs" style="left:1021px;top:993px;width:8px;height:44px;background:#dcdfe8"></div>
<div class="abs" style="left:1029px;top:993px;width:95px;height:44px;background:#d3d9e3;border-radius:4px"></div>
<div class="abs" style="left:1124px;top:993px;width:4px;height:44px;background:#dcdfe8;border-radius:0 3px 3px 0"></div>
<div class="abs" style="left:1136px;top:993px;width:784px;height:44px;background:#dcdfe8;border-radius:4px 0 0 4px"></div>
<div class="glow" style="left:4.5px;top:987px;width:95.0px;height:14px"></div>
<div class="abs " style="left:11.50px;top:987.00px;font-size:12px;line-height:15px;letter-spacing:-0.075px;color:#16161e;white-space:nowrap;">Mouse Position</div>
<div class="glow" style="left:793.6px;top:987px;width:81.5px;height:14px"></div>
<div class="abs " style="left:800.60px;top:987.00px;font-size:12px;line-height:15px;color:#16161e;white-space:nowrap;transform:scaleX(0.9286);transform-origin:0 0;">Process Time</div>
<div class="glow" style="left:1030.5px;top:987px;width:35.2px;height:14px"></div>
<div class="abs " style="left:1037.50px;top:987.00px;font-size:12px;line-height:15px;color:#16161e;white-space:nowrap;transform:scaleX(0.9373);transform-origin:0 0;">Grid</div>
<div class="glow" style="left:1137.4px;top:987px;width:79.6px;height:14px"></div>
<div class="abs " style="left:1144.40px;top:987.00px;font-size:12px;line-height:15px;color:#16161e;white-space:nowrap;transform:scaleX(0.9278);transform-origin:0 0;">Select Status</div>
<div class="abs " style="left:49.40px;top:1013.00px;font-size:12px;line-height:15px;color:#16161e;white-space:nowrap;transform:scaleX(0.9043);transform-origin:0 0;">Box</div>
<div class="abs " style="left:78.10px;top:1013.00px;font-size:12px;line-height:15px;color:#16161e;white-space:nowrap;transform:scaleX(0.8008);transform-origin:0 0;">(</div>
<div class="abs " style="left:85.60px;top:1013.00px;font-size:12px;line-height:15px;color:#16161e;white-space:nowrap;transform:scaleX(0.9060);transform-origin:0 0;">-72.898,44.752</div>
<div class="abs " style="left:162.50px;top:1013.00px;font-size:12px;line-height:15px;color:#16161e;white-space:nowrap;transform:scaleX(0.9542);transform-origin:0 0;">[µm]</div>
<div class="abs " style="left:190.60px;top:1013.00px;font-size:12px;line-height:15px;color:#16161e;white-space:nowrap;transform:scaleX(0.8008);transform-origin:0 0;">)</div>
<div class="abs " style="left:839.00px;top:1013.00px;font-size:12px;line-height:15px;color:#16161e;white-space:nowrap;transform:scaleX(0.8883);transform-origin:0 0;">1 ms</div>
<div class="abs " style="left:956.90px;top:1013.00px;font-size:12px;line-height:15px;color:#16161e;white-space:nowrap;transform:scaleX(0.9364);transform-origin:0 0;">0 ms</div>
<div class="abs " style="left:1075.60px;top:1013.00px;font-size:12px;line-height:15px;color:#16161e;white-space:nowrap;transform:scaleX(0.9540);transform-origin:0 0;">5µm</div>
<div class="abs " style="left:1182.10px;top:1013.00px;font-size:12px;line-height:15px;color:#16161e;white-space:nowrap;transform:scaleX(0.9439);transform-origin:0 0;">0</div>
<div class="abs " style="left:1296.25px;top:1013.00px;font-size:12px;line-height:15px;color:#16161e;white-space:nowrap;transform:scaleX(0.9439);transform-origin:0 0;">0</div>
<div class="abs " style="left:1411.00px;top:1013.00px;font-size:12px;line-height:15px;color:#16161e;white-space:nowrap;">1</div>
<div class="abs " style="left:1524.40px;top:1013.00px;font-size:12px;line-height:15px;color:#16161e;white-space:nowrap;transform:scaleX(0.9439);transform-origin:0 0;">0</div>
<div class="abs " style="left:1639.50px;top:1013.00px;font-size:12px;line-height:15px;color:#16161e;white-space:nowrap;transform:scaleX(0.9439);transform-origin:0 0;">0</div>
<div class="abs " style="left:1753.80px;top:1013.00px;font-size:12px;line-height:15px;color:#16161e;white-space:nowrap;transform:scaleX(0.9439);transform-origin:0 0;">0</div>
<div class="abs " style="left:1867.40px;top:1013.00px;font-size:12px;line-height:15px;color:#16161e;white-space:nowrap;transform:scaleX(0.9439);transform-origin:0 0;">0</div>
<svg class="abs" style="left:0;top:983px" width="1920" height="57" viewBox="0 983 1920 57">
<defs>
<pattern id="dth" width="5" height="5" patternUnits="userSpaceOnUse" patternTransform="translate(1 .5)"><rect width="5" height="5" fill="#909094"/><rect width="2.500" height="2.500" fill="#c6cad2"/><rect x="2.500" y="2.500" width="2.500" height="2.500" fill="#c6cad2"/></pattern>
<pattern id="hg2" width="3.600" height="3.600" patternUnits="userSpaceOnUse" patternTransform="rotate(-27 0 0)"><rect width="1.700" height="3.600" fill="#1cc888"/></pattern>
<pattern id="hgy" width="2.800" height="2.800" patternUnits="userSpaceOnUse" patternTransform="rotate(-45 0 0)"><rect width="1.100" height="2.800" fill="#b4b4b6"/></pattern>
<g id="gq"><rect width="14" height="14" fill="#e4e4e6"/><rect width="14" height="4" fill="#9a9a9c"/><path d="M0 4h6l-6 6z" fill="#6e6e70"/><path d="M7.500 5l5.500 6.500h-11z" fill="none" stroke="#9c9c9e" stroke-width="1.500"/><rect y="11.500" width="14" height="2.500" fill="#9c9c9e"/></g>
</defs>
<!-- XY pixel icon -->
<g fill="#000" shape-rendering="crispEdges">
<path d="M6 1003h2v5h-2zM14 1003h2v5h-2zM7 1008h2v3h-2zM13 1008h2v3h-2zM9 1010h4v4h-4zM8 1014h2v4h-2zM12 1014h2v4h-2zM6 1018h3v3h-3zM13 1018h3v3h-3zM5 1021h2v6h-2zM15 1021h2v6h-2z"/>
<path d="M22 1013h2v6h-2zM30 1013h2v6h-2zM23 1019h3v3h-3zM28 1019h3v3h-3zM26 1022h3v5h-3zM25 1027h3v3h-3zM23 1030h3v3h-3zM22 1033h2v2h-2z"/>
</g>
<!-- process time clock -->
<circle cx="808.100" cy="1018" r="14.800" fill="#8e8e92"/><circle cx="808.100" cy="1018" r="14.800" fill="url(#dth)"/>
<!-- doc -->
<path d="M917 1003h18l6 6v26h-24z" fill="#8c8c8e"/><path d="M919.500 1005.500h14l5 5v18.500h-19z" fill="#f0f0f2"/><path d="M933 1003.500v7h7.500z" fill="#b0b0b2"/><path d="M934.500 1006.500v3.500h3.500z" fill="#fafafa"/>
<g fill="#b4b4b8"><rect x="921.500" y="1009" width="3" height="2"/><rect x="921.500" y="1015" width="3" height="2"/><rect x="927.500" y="1015" width="3" height="2"/><rect x="921.500" y="1021" width="3" height="2"/><rect x="933" y="1021" width="3" height="2"/></g>
<rect x="925" y="1030.500" width="2.200" height="2" fill="#f4f4f4"/><rect x="929.500" y="1030.500" width="2.200" height="2" fill="#f4f4f4"/>
<!-- grid icon -->
<g fill="#000" shape-rendering="crispEdges"><rect x="1030" y="1003" width="4" height="4"/><rect x="1058" y="1003" width="4" height="4"/><rect x="1030" y="1031" width="4" height="4"/><rect x="1058" y="1031" width="4" height="4"/>
<rect x="1037" y="1004" width="19" height="2"/><rect x="1038" y="1002" width="2" height="6"/><rect x="1053" y="1002" width="2" height="6"/><rect x="1036" y="1003" width="2" height="4"/><rect x="1055" y="1003" width="2" height="4"/>
<rect x="1032" y="1010" width="2" height="18"/><rect x="1030" y="1011" width="6" height="2"/><rect x="1030" y="1025" width="6" height="2"/><rect x="1031" y="1009" width="4" height="2"/><rect x="1031" y="1027" width="4" height="2"/>
<path d="M1037 1017h2v8h-2zM1038 1015h3v2h-3zM1040 1017h2v8h-2zM1038 1020h3v2h-3zM1043 1015h2v9h-2zM1044 1023h4v2h-4zM1047 1015h2v9h-2zM1049 1015h6v2h-6zM1051 1015h2v10h-2zM1056 1016h2v8h-2zM1057 1015h3v2h-3zM1057 1023h3v2h-3zM1059 1016h2v8h-2z"/></g>
<!-- select point -->
<path d="M1144.500 1029v-3l2-3.500 2-3 2-2.500M1153 1014.500l3.500-2.500 3-1.500 3.500-1" fill="none" stroke="#626264" stroke-width="1.700"/><rect x="1148.300" y="1014.300" width="4.700" height="4.700" fill="#626264"/><path d="M1153.700 1019.300l9.300 9.200-6 .3-3.300 3.700z" fill="#6c6c6e"/>
<!-- path -->
<path d="M1253.500 1006h27l-12.500 26-14.500-14.500" fill="none" stroke="#747476" stroke-width="1.500"/>
<!-- box green -->
<rect x="1367" y="1005" width="28" height="28" fill="#d8dce4"/><rect x="1367" y="1005" width="28" height="28" fill="url(#hg2)"/><rect x="1368" y="1006" width="26" height="26" fill="none" stroke="#1cc888" stroke-width="2"/>
<!-- polygon gray -->
<path d="M1479.500 1011.500l13.500-8.500h5.500l12 17-12.500 14h-14.500l-2.500-14z" fill="url(#hgy)" stroke="#b4b4b6" stroke-width="1.400" stroke-linejoin="round"/>
<!-- cell gray -->
<rect x="1594" y="1003" width="21" height="16" fill="#e8e8ec"/><path d="M1603 1017l9 8.500-9 8.500-9-8.500z" fill="#d4d4d8"/><rect x="1614" y="1008" width="12" height="14" fill="#c8c8cc"/><rect x="1616" y="1010" width="8" height="10" fill="#dcdce0"/>
<!-- array gray -->
<use href="#gq" x="1708" y="1005"/><use href="#gq" x="1724" y="1005"/><use href="#gq" x="1708" y="1021"/><use href="#gq" x="1724" y="1021"/>
<!-- T gray -->
<text x="1819.600" y="1034.500" font-family="Liberation Serif" font-weight="bold" font-style="italic" font-size="45" fill="#808082" textLength="33" lengthAdjust="spacingAndGlyphs">T</text>
</svg>
</body></html>
